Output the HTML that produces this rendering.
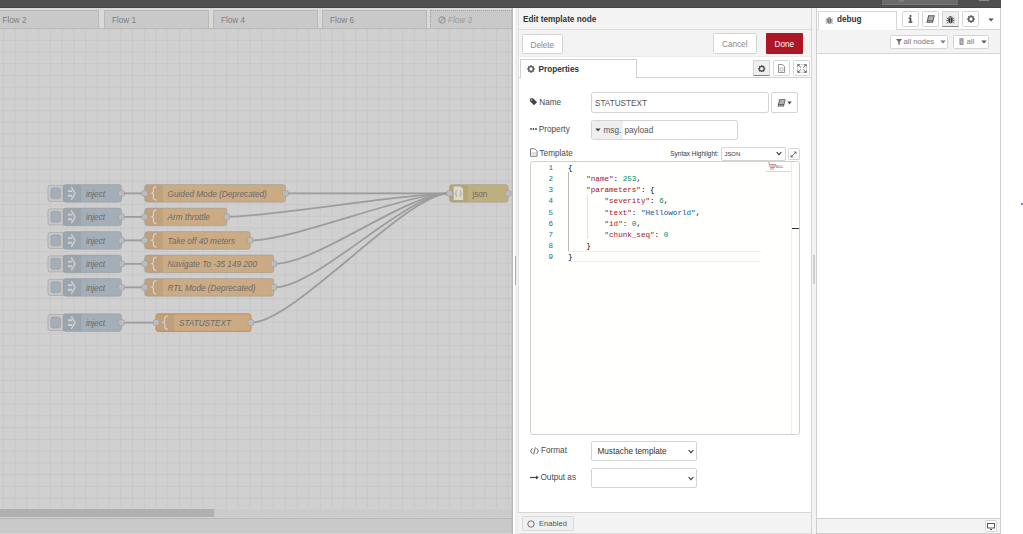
<!DOCTYPE html><html><head><meta charset="utf-8"><style>
*{box-sizing:border-box}
html,body{margin:0;padding:0}
body{width:1023px;height:534px;overflow:hidden;background:#fff;position:relative;font-family:"Liberation Sans",sans-serif;font-size:8.2px;color:#555}
.a{position:absolute}
.t{position:absolute;white-space:nowrap;line-height:1}
.tab{position:absolute;top:10px;height:19px;width:105px;background:#c9c9c9;border:1px solid #b9b9b9;border-bottom:none}
.tab span{position:absolute;left:7px;top:5.6px;font-size:8.2px;color:#808080;line-height:1;white-space:nowrap}
.btn{position:absolute;background:#fff;border:1px solid #d4d4d4;border-radius:1.5px}
.inp{position:absolute;background:#fff;border:1px solid #d4d4d4;border-radius:2.5px}
.lbl{position:absolute;font-size:8.2px;color:#4a4a4a;white-space:nowrap;line-height:1}
.code{position:absolute;font-family:"Liberation Mono",monospace;font-size:7.6px;white-space:pre;line-height:11.14px;color:#000}
.k{color:#a31515}.s{color:#0451a5}.n{color:#098658}
</style></head><body>
<div class="a" style="left:0;top:0;width:1001px;height:8px;background:#505050;border-bottom:1px solid #464646"></div>
<div class="a" style="left:882px;top:0;width:76px;height:5px;background:#6b6b6b;border-bottom:1px dotted #7d7d7d"></div>
<div class="a" style="left:899px;top:0;width:5px;height:2px;background:#7f7f7f"></div>
<div class="a" style="left:979px;top:0;width:10px;height:1px;background:#8a8a8a"></div>
<div class="a" style="left:0;top:8px;width:513px;height:21px;background:#d9d9d9"></div>
<div class="tab" style="left:-6px"><span style="left:7.5px">Flow 2</span></div>
<div class="tab" style="left:104px"><span style="left:7px">Flow 1</span></div>
<div class="tab" style="left:213px"><span style="left:7px">Flow 4</span></div>
<div class="tab" style="left:322px"><span style="left:7px">Flow 6</span></div>
<div class="tab" style="left:430px;width:90px;border:1px dotted #a0a0a0;border-bottom:none"><span style="left:17px;font-style:italic;color:#9a9a9a">Flow 3</span><svg class="a" style="left:7px;top:5px" width="8" height="8" viewBox="0 0 8 8"><circle cx="4" cy="4" r="3.1" fill="none" stroke="#9a9a9a" stroke-width="1.2"/><line x1="1.9" y1="6.1" x2="6.1" y2="1.9" stroke="#9a9a9a" stroke-width="1.2"/></svg></div>
<div class="a" style="left:0;top:28px;width:513px;height:1px;background:#b9b9b9"></div>
<svg class="a" style="left:0;top:29px" width="513" height="489" viewBox="0 29 513 489"><rect x="0" y="29" width="513" height="489" fill="#d0d0d0"/><g stroke="#c8c8c8" stroke-width="1"><line x1="3.40" y1="29" x2="3.40" y2="518"/><line x1="15.14" y1="29" x2="15.14" y2="518"/><line x1="26.88" y1="29" x2="26.88" y2="518"/><line x1="38.62" y1="29" x2="38.62" y2="518"/><line x1="50.36" y1="29" x2="50.36" y2="518"/><line x1="62.10" y1="29" x2="62.10" y2="518"/><line x1="73.84" y1="29" x2="73.84" y2="518"/><line x1="85.58" y1="29" x2="85.58" y2="518"/><line x1="97.32" y1="29" x2="97.32" y2="518"/><line x1="109.06" y1="29" x2="109.06" y2="518"/><line x1="120.80" y1="29" x2="120.80" y2="518"/><line x1="132.54" y1="29" x2="132.54" y2="518"/><line x1="144.28" y1="29" x2="144.28" y2="518"/><line x1="156.02" y1="29" x2="156.02" y2="518"/><line x1="167.76" y1="29" x2="167.76" y2="518"/><line x1="179.50" y1="29" x2="179.50" y2="518"/><line x1="191.24" y1="29" x2="191.24" y2="518"/><line x1="202.98" y1="29" x2="202.98" y2="518"/><line x1="214.72" y1="29" x2="214.72" y2="518"/><line x1="226.46" y1="29" x2="226.46" y2="518"/><line x1="238.20" y1="29" x2="238.20" y2="518"/><line x1="249.94" y1="29" x2="249.94" y2="518"/><line x1="261.68" y1="29" x2="261.68" y2="518"/><line x1="273.42" y1="29" x2="273.42" y2="518"/><line x1="285.16" y1="29" x2="285.16" y2="518"/><line x1="296.90" y1="29" x2="296.90" y2="518"/><line x1="308.64" y1="29" x2="308.64" y2="518"/><line x1="320.38" y1="29" x2="320.38" y2="518"/><line x1="332.12" y1="29" x2="332.12" y2="518"/><line x1="343.86" y1="29" x2="343.86" y2="518"/><line x1="355.60" y1="29" x2="355.60" y2="518"/><line x1="367.34" y1="29" x2="367.34" y2="518"/><line x1="379.08" y1="29" x2="379.08" y2="518"/><line x1="390.82" y1="29" x2="390.82" y2="518"/><line x1="402.56" y1="29" x2="402.56" y2="518"/><line x1="414.30" y1="29" x2="414.30" y2="518"/><line x1="426.04" y1="29" x2="426.04" y2="518"/><line x1="437.78" y1="29" x2="437.78" y2="518"/><line x1="449.52" y1="29" x2="449.52" y2="518"/><line x1="461.26" y1="29" x2="461.26" y2="518"/><line x1="473.00" y1="29" x2="473.00" y2="518"/><line x1="484.74" y1="29" x2="484.74" y2="518"/><line x1="496.48" y1="29" x2="496.48" y2="518"/><line x1="508.22" y1="29" x2="508.22" y2="518"/><line x1="0" y1="40.24" x2="513" y2="40.24"/><line x1="0" y1="51.98" x2="513" y2="51.98"/><line x1="0" y1="63.72" x2="513" y2="63.72"/><line x1="0" y1="75.46" x2="513" y2="75.46"/><line x1="0" y1="87.20" x2="513" y2="87.20"/><line x1="0" y1="98.94" x2="513" y2="98.94"/><line x1="0" y1="110.68" x2="513" y2="110.68"/><line x1="0" y1="122.42" x2="513" y2="122.42"/><line x1="0" y1="134.16" x2="513" y2="134.16"/><line x1="0" y1="145.90" x2="513" y2="145.90"/><line x1="0" y1="157.64" x2="513" y2="157.64"/><line x1="0" y1="169.38" x2="513" y2="169.38"/><line x1="0" y1="181.12" x2="513" y2="181.12"/><line x1="0" y1="192.86" x2="513" y2="192.86"/><line x1="0" y1="204.60" x2="513" y2="204.60"/><line x1="0" y1="216.34" x2="513" y2="216.34"/><line x1="0" y1="228.08" x2="513" y2="228.08"/><line x1="0" y1="239.82" x2="513" y2="239.82"/><line x1="0" y1="251.56" x2="513" y2="251.56"/><line x1="0" y1="263.30" x2="513" y2="263.30"/><line x1="0" y1="275.04" x2="513" y2="275.04"/><line x1="0" y1="286.78" x2="513" y2="286.78"/><line x1="0" y1="298.52" x2="513" y2="298.52"/><line x1="0" y1="310.26" x2="513" y2="310.26"/><line x1="0" y1="322.00" x2="513" y2="322.00"/><line x1="0" y1="333.74" x2="513" y2="333.74"/><line x1="0" y1="345.48" x2="513" y2="345.48"/><line x1="0" y1="357.22" x2="513" y2="357.22"/><line x1="0" y1="368.96" x2="513" y2="368.96"/><line x1="0" y1="380.70" x2="513" y2="380.70"/><line x1="0" y1="392.44" x2="513" y2="392.44"/><line x1="0" y1="404.18" x2="513" y2="404.18"/><line x1="0" y1="415.92" x2="513" y2="415.92"/><line x1="0" y1="427.66" x2="513" y2="427.66"/><line x1="0" y1="439.40" x2="513" y2="439.40"/><line x1="0" y1="451.14" x2="513" y2="451.14"/><line x1="0" y1="462.88" x2="513" y2="462.88"/><line x1="0" y1="474.62" x2="513" y2="474.62"/><line x1="0" y1="486.36" x2="513" y2="486.36"/><line x1="0" y1="498.10" x2="513" y2="498.10"/><line x1="0" y1="509.84" x2="513" y2="509.84"/></g><path d="M121.50 193.40 C138.90 193.40 127.30 193.40 144.70 193.40" fill="none" stroke="#9c9c9c" stroke-width="1.76"/><path d="M285.50 193.40 C329.52 193.40 405.48 193.40 449.50 193.40" fill="none" stroke="#9c9c9c" stroke-width="1.76"/><path d="M121.50 216.90 C138.90 216.90 127.30 216.90 144.70 216.90" fill="none" stroke="#9c9c9c" stroke-width="1.76"/><path d="M226.90 216.90 C270.93 216.90 405.48 193.40 449.50 193.40" fill="none" stroke="#9c9c9c" stroke-width="1.76"/><path d="M121.50 240.40 C138.90 240.40 127.30 240.40 144.70 240.40" fill="none" stroke="#9c9c9c" stroke-width="1.76"/><path d="M250.30 240.40 C294.32 240.40 405.48 193.40 449.50 193.40" fill="none" stroke="#9c9c9c" stroke-width="1.76"/><path d="M121.50 263.90 C138.90 263.90 127.30 263.90 144.70 263.90" fill="none" stroke="#9c9c9c" stroke-width="1.76"/><path d="M273.80 263.90 C317.82 263.90 405.48 193.40 449.50 193.40" fill="none" stroke="#9c9c9c" stroke-width="1.76"/><path d="M121.50 287.40 C138.90 287.40 127.30 287.40 144.70 287.40" fill="none" stroke="#9c9c9c" stroke-width="1.76"/><path d="M273.80 287.40 C317.82 287.40 405.48 193.40 449.50 193.40" fill="none" stroke="#9c9c9c" stroke-width="1.76"/><path d="M121.50 322.60 C147.45 322.60 130.15 322.60 156.10 322.60" fill="none" stroke="#9c9c9c" stroke-width="1.76"/><path d="M250.90 322.60 C294.93 322.60 405.48 193.40 449.50 193.40" fill="none" stroke="#9c9c9c" stroke-width="1.76"/><rect x="48" y="185.40" width="17" height="16" rx="2" fill="#c8c8c8" stroke="#9c9c9c" stroke-width="0.6"/><rect x="50.8" y="187.80" width="9.7" height="11" rx="1.8" fill="#a3aeb8" stroke="#9c9c9c" stroke-width="0.6"/><rect x="63.00" y="184.60" width="58.50" height="17.6" rx="2.9" fill="#a3aeb8" stroke="#9c9c9c" stroke-width="0.6"/><path d="M65.90 184.90 H80.60 V201.90 H65.90 A2.6 2.6 0 0 1 63.30 199.30 V187.50 A2.6 2.6 0 0 1 65.90 184.90Z" fill="rgba(0,0,0,0.05)"/><line x1="80.60" y1="184.90" x2="80.60" y2="201.90" stroke="rgba(0,0,0,0.08)" stroke-width="0.6"/><g stroke="#d0d0d0" fill="none" stroke-linecap="round" stroke-linejoin="round"><path d="M68 191.10 H72 M68 195.80 H72" stroke-width="1.9" stroke-linecap="butt"/><path d="M71.6 187.60 L75 193.45 L71.6 199.30" stroke-width="1.4"/></g><text x="85.90" y="196.50" font-family="Liberation Sans" font-size="8.2" fill="#6a6a6a" style="font-style:italic;">inject</text><rect x="118.57" y="190.47" width="5.87" height="5.87" rx="1.76" fill="#bcbcbc" stroke="#9c9c9c" stroke-width="0.6"/><rect x="144.70" y="184.60" width="140.80" height="17.6" rx="2.9" fill="#caab84" stroke="#9c9c9c" stroke-width="0.6"/><path d="M147.60 184.90 H162.30 V201.90 H147.60 A2.6 2.6 0 0 1 145.00 199.30 V187.50 A2.6 2.6 0 0 1 147.60 184.90Z" fill="rgba(0,0,0,0.05)"/><line x1="162.30" y1="184.90" x2="162.30" y2="201.90" stroke="rgba(0,0,0,0.08)" stroke-width="0.6"/><path d="M156.50 186.50 C154.30 186.70 153.40 187.40 153.40 189.20 V191.60 C153.40 192.60 152.50 193.20 151.20 193.30 C152.50 193.40 153.40 194.00 153.40 195.00 V197.50 C153.40 199.30 154.30 200.00 156.50 200.20" fill="none" stroke="#d6d3ce" stroke-width="1.15"/><text x="167.60" y="196.50" font-family="Liberation Sans" font-size="8.2" fill="#6a6a6a" style="font-style:italic;">Guided Mode (Deprecated)</text><rect x="141.77" y="190.47" width="5.87" height="5.87" rx="1.76" fill="#bcbcbc" stroke="#9c9c9c" stroke-width="0.6"/><rect x="282.57" y="190.47" width="5.87" height="5.87" rx="1.76" fill="#bcbcbc" stroke="#9c9c9c" stroke-width="0.6"/><rect x="48" y="208.90" width="17" height="16" rx="2" fill="#c8c8c8" stroke="#9c9c9c" stroke-width="0.6"/><rect x="50.8" y="211.30" width="9.7" height="11" rx="1.8" fill="#a3aeb8" stroke="#9c9c9c" stroke-width="0.6"/><rect x="63.00" y="208.10" width="58.50" height="17.6" rx="2.9" fill="#a3aeb8" stroke="#9c9c9c" stroke-width="0.6"/><path d="M65.90 208.40 H80.60 V225.40 H65.90 A2.6 2.6 0 0 1 63.30 222.80 V211.00 A2.6 2.6 0 0 1 65.90 208.40Z" fill="rgba(0,0,0,0.05)"/><line x1="80.60" y1="208.40" x2="80.60" y2="225.40" stroke="rgba(0,0,0,0.08)" stroke-width="0.6"/><g stroke="#d0d0d0" fill="none" stroke-linecap="round" stroke-linejoin="round"><path d="M68 214.60 H72 M68 219.30 H72" stroke-width="1.9" stroke-linecap="butt"/><path d="M71.6 211.10 L75 216.95 L71.6 222.80" stroke-width="1.4"/></g><text x="85.90" y="220.00" font-family="Liberation Sans" font-size="8.2" fill="#6a6a6a" style="font-style:italic;">inject</text><rect x="118.57" y="213.97" width="5.87" height="5.87" rx="1.76" fill="#bcbcbc" stroke="#9c9c9c" stroke-width="0.6"/><rect x="144.70" y="208.10" width="82.20" height="17.6" rx="2.9" fill="#caab84" stroke="#9c9c9c" stroke-width="0.6"/><path d="M147.60 208.40 H162.30 V225.40 H147.60 A2.6 2.6 0 0 1 145.00 222.80 V211.00 A2.6 2.6 0 0 1 147.60 208.40Z" fill="rgba(0,0,0,0.05)"/><line x1="162.30" y1="208.40" x2="162.30" y2="225.40" stroke="rgba(0,0,0,0.08)" stroke-width="0.6"/><path d="M156.50 210.00 C154.30 210.20 153.40 210.90 153.40 212.70 V215.10 C153.40 216.10 152.50 216.70 151.20 216.80 C152.50 216.90 153.40 217.50 153.40 218.50 V221.00 C153.40 222.80 154.30 223.50 156.50 223.70" fill="none" stroke="#d6d3ce" stroke-width="1.15"/><text x="167.60" y="220.00" font-family="Liberation Sans" font-size="8.2" fill="#6a6a6a" style="font-style:italic;">Arm throttle</text><rect x="141.77" y="213.97" width="5.87" height="5.87" rx="1.76" fill="#bcbcbc" stroke="#9c9c9c" stroke-width="0.6"/><rect x="223.97" y="213.97" width="5.87" height="5.87" rx="1.76" fill="#bcbcbc" stroke="#9c9c9c" stroke-width="0.6"/><rect x="48" y="232.40" width="17" height="16" rx="2" fill="#c8c8c8" stroke="#9c9c9c" stroke-width="0.6"/><rect x="50.8" y="234.80" width="9.7" height="11" rx="1.8" fill="#a3aeb8" stroke="#9c9c9c" stroke-width="0.6"/><rect x="63.00" y="231.60" width="58.50" height="17.6" rx="2.9" fill="#a3aeb8" stroke="#9c9c9c" stroke-width="0.6"/><path d="M65.90 231.90 H80.60 V248.90 H65.90 A2.6 2.6 0 0 1 63.30 246.30 V234.50 A2.6 2.6 0 0 1 65.90 231.90Z" fill="rgba(0,0,0,0.05)"/><line x1="80.60" y1="231.90" x2="80.60" y2="248.90" stroke="rgba(0,0,0,0.08)" stroke-width="0.6"/><g stroke="#d0d0d0" fill="none" stroke-linecap="round" stroke-linejoin="round"><path d="M68 238.10 H72 M68 242.80 H72" stroke-width="1.9" stroke-linecap="butt"/><path d="M71.6 234.60 L75 240.45 L71.6 246.30" stroke-width="1.4"/></g><text x="85.90" y="243.50" font-family="Liberation Sans" font-size="8.2" fill="#6a6a6a" style="font-style:italic;">inject</text><rect x="118.57" y="237.47" width="5.87" height="5.87" rx="1.76" fill="#bcbcbc" stroke="#9c9c9c" stroke-width="0.6"/><rect x="144.70" y="231.60" width="105.60" height="17.6" rx="2.9" fill="#caab84" stroke="#9c9c9c" stroke-width="0.6"/><path d="M147.60 231.90 H162.30 V248.90 H147.60 A2.6 2.6 0 0 1 145.00 246.30 V234.50 A2.6 2.6 0 0 1 147.60 231.90Z" fill="rgba(0,0,0,0.05)"/><line x1="162.30" y1="231.90" x2="162.30" y2="248.90" stroke="rgba(0,0,0,0.08)" stroke-width="0.6"/><path d="M156.50 233.50 C154.30 233.70 153.40 234.40 153.40 236.20 V238.60 C153.40 239.60 152.50 240.20 151.20 240.30 C152.50 240.40 153.40 241.00 153.40 242.00 V244.50 C153.40 246.30 154.30 247.00 156.50 247.20" fill="none" stroke="#d6d3ce" stroke-width="1.15"/><text x="167.60" y="243.50" font-family="Liberation Sans" font-size="8.2" fill="#6a6a6a" style="font-style:italic;">Take off 40 meters</text><rect x="141.77" y="237.47" width="5.87" height="5.87" rx="1.76" fill="#bcbcbc" stroke="#9c9c9c" stroke-width="0.6"/><rect x="247.37" y="237.47" width="5.87" height="5.87" rx="1.76" fill="#bcbcbc" stroke="#9c9c9c" stroke-width="0.6"/><rect x="48" y="255.90" width="17" height="16" rx="2" fill="#c8c8c8" stroke="#9c9c9c" stroke-width="0.6"/><rect x="50.8" y="258.30" width="9.7" height="11" rx="1.8" fill="#a3aeb8" stroke="#9c9c9c" stroke-width="0.6"/><rect x="63.00" y="255.10" width="58.50" height="17.6" rx="2.9" fill="#a3aeb8" stroke="#9c9c9c" stroke-width="0.6"/><path d="M65.90 255.40 H80.60 V272.40 H65.90 A2.6 2.6 0 0 1 63.30 269.80 V258.00 A2.6 2.6 0 0 1 65.90 255.40Z" fill="rgba(0,0,0,0.05)"/><line x1="80.60" y1="255.40" x2="80.60" y2="272.40" stroke="rgba(0,0,0,0.08)" stroke-width="0.6"/><g stroke="#d0d0d0" fill="none" stroke-linecap="round" stroke-linejoin="round"><path d="M68 261.60 H72 M68 266.30 H72" stroke-width="1.9" stroke-linecap="butt"/><path d="M71.6 258.10 L75 263.95 L71.6 269.80" stroke-width="1.4"/></g><text x="85.90" y="267.00" font-family="Liberation Sans" font-size="8.2" fill="#6a6a6a" style="font-style:italic;">inject</text><rect x="118.57" y="260.97" width="5.87" height="5.87" rx="1.76" fill="#bcbcbc" stroke="#9c9c9c" stroke-width="0.6"/><rect x="144.70" y="255.10" width="129.10" height="17.6" rx="2.9" fill="#caab84" stroke="#9c9c9c" stroke-width="0.6"/><path d="M147.60 255.40 H162.30 V272.40 H147.60 A2.6 2.6 0 0 1 145.00 269.80 V258.00 A2.6 2.6 0 0 1 147.60 255.40Z" fill="rgba(0,0,0,0.05)"/><line x1="162.30" y1="255.40" x2="162.30" y2="272.40" stroke="rgba(0,0,0,0.08)" stroke-width="0.6"/><path d="M156.50 257.00 C154.30 257.20 153.40 257.90 153.40 259.70 V262.10 C153.40 263.10 152.50 263.70 151.20 263.80 C152.50 263.90 153.40 264.50 153.40 265.50 V268.00 C153.40 269.80 154.30 270.50 156.50 270.70" fill="none" stroke="#d6d3ce" stroke-width="1.15"/><text x="167.60" y="267.00" font-family="Liberation Sans" font-size="8.2" fill="#6a6a6a" style="font-style:italic;">Navigate To -35 149 200</text><rect x="141.77" y="260.97" width="5.87" height="5.87" rx="1.76" fill="#bcbcbc" stroke="#9c9c9c" stroke-width="0.6"/><rect x="270.87" y="260.97" width="5.87" height="5.87" rx="1.76" fill="#bcbcbc" stroke="#9c9c9c" stroke-width="0.6"/><rect x="48" y="279.40" width="17" height="16" rx="2" fill="#c8c8c8" stroke="#9c9c9c" stroke-width="0.6"/><rect x="50.8" y="281.80" width="9.7" height="11" rx="1.8" fill="#a3aeb8" stroke="#9c9c9c" stroke-width="0.6"/><rect x="63.00" y="278.60" width="58.50" height="17.6" rx="2.9" fill="#a3aeb8" stroke="#9c9c9c" stroke-width="0.6"/><path d="M65.90 278.90 H80.60 V295.90 H65.90 A2.6 2.6 0 0 1 63.30 293.30 V281.50 A2.6 2.6 0 0 1 65.90 278.90Z" fill="rgba(0,0,0,0.05)"/><line x1="80.60" y1="278.90" x2="80.60" y2="295.90" stroke="rgba(0,0,0,0.08)" stroke-width="0.6"/><g stroke="#d0d0d0" fill="none" stroke-linecap="round" stroke-linejoin="round"><path d="M68 285.10 H72 M68 289.80 H72" stroke-width="1.9" stroke-linecap="butt"/><path d="M71.6 281.60 L75 287.45 L71.6 293.30" stroke-width="1.4"/></g><text x="85.90" y="290.50" font-family="Liberation Sans" font-size="8.2" fill="#6a6a6a" style="font-style:italic;">inject</text><rect x="118.57" y="284.47" width="5.87" height="5.87" rx="1.76" fill="#bcbcbc" stroke="#9c9c9c" stroke-width="0.6"/><rect x="144.70" y="278.60" width="129.10" height="17.6" rx="2.9" fill="#caab84" stroke="#9c9c9c" stroke-width="0.6"/><path d="M147.60 278.90 H162.30 V295.90 H147.60 A2.6 2.6 0 0 1 145.00 293.30 V281.50 A2.6 2.6 0 0 1 147.60 278.90Z" fill="rgba(0,0,0,0.05)"/><line x1="162.30" y1="278.90" x2="162.30" y2="295.90" stroke="rgba(0,0,0,0.08)" stroke-width="0.6"/><path d="M156.50 280.50 C154.30 280.70 153.40 281.40 153.40 283.20 V285.60 C153.40 286.60 152.50 287.20 151.20 287.30 C152.50 287.40 153.40 288.00 153.40 289.00 V291.50 C153.40 293.30 154.30 294.00 156.50 294.20" fill="none" stroke="#d6d3ce" stroke-width="1.15"/><text x="167.60" y="290.50" font-family="Liberation Sans" font-size="8.2" fill="#6a6a6a" style="font-style:italic;">RTL Mode (Deprecated)</text><rect x="141.77" y="284.47" width="5.87" height="5.87" rx="1.76" fill="#bcbcbc" stroke="#9c9c9c" stroke-width="0.6"/><rect x="270.87" y="284.47" width="5.87" height="5.87" rx="1.76" fill="#bcbcbc" stroke="#9c9c9c" stroke-width="0.6"/><rect x="48" y="314.60" width="17" height="16" rx="2" fill="#c8c8c8" stroke="#9c9c9c" stroke-width="0.6"/><rect x="50.8" y="317.00" width="9.7" height="11" rx="1.8" fill="#a3aeb8" stroke="#9c9c9c" stroke-width="0.6"/><rect x="63.00" y="313.80" width="58.50" height="17.6" rx="2.9" fill="#a3aeb8" stroke="#9c9c9c" stroke-width="0.6"/><path d="M65.90 314.10 H80.60 V331.10 H65.90 A2.6 2.6 0 0 1 63.30 328.50 V316.70 A2.6 2.6 0 0 1 65.90 314.10Z" fill="rgba(0,0,0,0.05)"/><line x1="80.60" y1="314.10" x2="80.60" y2="331.10" stroke="rgba(0,0,0,0.08)" stroke-width="0.6"/><g stroke="#d0d0d0" fill="none" stroke-linecap="round" stroke-linejoin="round"><path d="M68 320.30 H72 M68 325.00 H72" stroke-width="1.9" stroke-linecap="butt"/><path d="M71.6 316.80 L75 322.65 L71.6 328.50" stroke-width="1.4"/></g><text x="85.90" y="325.70" font-family="Liberation Sans" font-size="8.2" fill="#6a6a6a" style="font-style:italic;">inject</text><rect x="118.57" y="319.67" width="5.87" height="5.87" rx="1.76" fill="#bcbcbc" stroke="#9c9c9c" stroke-width="0.6"/><rect x="156.10" y="313.80" width="94.80" height="17.6" rx="2.9" fill="#caab84" stroke="#cf8f57" stroke-width="1.2"/><path d="M159.00 314.10 H173.70 V331.10 H159.00 A2.6 2.6 0 0 1 156.40 328.50 V316.70 A2.6 2.6 0 0 1 159.00 314.10Z" fill="rgba(0,0,0,0.05)"/><line x1="173.70" y1="314.10" x2="173.70" y2="331.10" stroke="rgba(0,0,0,0.08)" stroke-width="0.6"/><path d="M167.90 315.70 C165.70 315.90 164.80 316.60 164.80 318.40 V320.80 C164.80 321.80 163.90 322.40 162.60 322.50 C163.90 322.60 164.80 323.20 164.80 324.20 V326.70 C164.80 328.50 165.70 329.20 167.90 329.40" fill="none" stroke="#d6d3ce" stroke-width="1.15"/><text x="179.00" y="325.70" font-family="Liberation Sans" font-size="8.2" fill="#6a6a6a" style="font-style:italic;">STATUSTEXT</text><rect x="153.17" y="319.67" width="5.87" height="5.87" rx="1.76" fill="#bcbcbc" stroke="#9c9c9c" stroke-width="0.6"/><rect x="247.97" y="319.67" width="5.87" height="5.87" rx="1.76" fill="#bcbcbc" stroke="#9c9c9c" stroke-width="0.6"/><rect x="449.50" y="184.60" width="58.60" height="17.6" rx="2.9" fill="#bfaf7e" stroke="#9c9c9c" stroke-width="0.6"/><path d="M452.40 184.90 H467.10 V201.90 H452.40 A2.6 2.6 0 0 1 449.80 199.30 V187.50 A2.6 2.6 0 0 1 452.40 184.90Z" fill="rgba(0,0,0,0.05)"/><line x1="467.10" y1="184.90" x2="467.10" y2="201.90" stroke="rgba(0,0,0,0.08)" stroke-width="0.6"/><path d="M453.70 186.50 H460.50 L463.10 189.10 V199.90 H453.70Z" fill="#d9d9d9"/><path d="M458.10 190.20 C457.10 190.20 457.40 191.40 457.30 192.60 C457.30 193.20 456.90 193.40 456.50 193.40 C456.90 193.40 457.30 193.60 457.30 194.20 C457.40 195.40 457.10 196.60 458.10 196.60 M461.10 190.20 C462.10 190.20 461.80 191.40 461.90 192.60 C461.90 193.20 462.30 193.40 462.70 193.40 C462.30 193.40 461.90 193.60 461.90 194.20 C461.80 195.40 462.10 196.60 461.10 196.60" fill="none" stroke="#b8965a" stroke-width="0.8" transform="translate(-1.2 0)"/><text x="472.40" y="196.50" font-family="Liberation Sans" font-size="8.2" fill="#6a6a6a" style="">json</text><rect x="446.57" y="190.47" width="5.87" height="5.87" rx="1.76" fill="#bcbcbc" stroke="#9c9c9c" stroke-width="0.6"/><rect x="505.17" y="190.47" width="5.87" height="5.87" rx="1.76" fill="#bcbcbc" stroke="#9c9c9c" stroke-width="0.6"/><rect x="0" y="509" width="214.4" height="8" fill="#b0b0b0"/><rect x="214.4" y="509" width="300" height="8" fill="#cbcbcb"/></svg>
<div class="a" style="left:0;top:518px;width:513px;height:16px;background:#c9c9c9;border-top:1px solid #b6b6b6;border-bottom:1px solid #d4d4d4"></div>
<!-- tray shadow + resize handle -->
<div class="a" style="left:511px;top:8px;width:1px;height:526px;background:rgba(0,0,0,0.04)"></div>
<div class="a" style="left:512px;top:8px;width:1px;height:526px;background:#b8b8b8"></div>
<div class="a" style="left:513px;top:8px;width:2px;height:526px;background:#fff"></div>
<div class="a" style="left:515px;top:8px;width:3px;height:526px;background:#efefef"></div>
<div class="a" style="left:515px;top:256px;width:1px;height:29px;background:#a8a8a8"></div>
<div class="a" style="left:518px;top:8px;width:1px;height:526px;background:#e2e2e2"></div>
<!-- tray body -->
<div class="a" style="left:519px;top:8px;width:292px;height:526px;background:#fff"></div>
<!-- header -->
<div class="a" style="left:519px;top:8px;width:292px;height:49px;background:#f3f3f3"></div>
<div class="a" style="left:518px;top:29px;width:293px;height:1px;background:#dcdcdc"></div>
<div class="a" style="left:518px;top:56px;width:293px;height:1px;background:#eaeaea"></div>
<div class="t" style="left:523px;top:16px;font-size:8.2px;font-weight:bold;color:#333">Edit template node</div>
<div class="btn" style="left:522px;top:34px;width:41px;height:20px"></div>
<div class="t" style="left:530.5px;top:41.5px;color:#888">Delete</div>
<div class="btn" style="left:713px;top:33px;width:44px;height:21px"></div>
<div class="t" style="left:722px;top:41px;color:#888">Cancel</div>
<div class="a" style="left:766px;top:33px;width:37px;height:21px;background:#ad1625;border-radius:1px"></div>
<div class="t" style="left:774.5px;top:41px;color:#fff">Done</div>
<!-- tabs -->
<div class="a" style="left:518px;top:77px;width:293px;height:1px;background:#d0d0d0"></div>
<div class="a" style="left:520px;top:59px;width:117px;height:19px;background:#fff;border:1px solid #d0d0d0;border-bottom:none;border-radius:1px 1px 0 0"></div>
<svg class="a" style="left:527px;top:64.5px" width="8" height="8" viewBox="0 0 16 16"><path fill="#555" d="M15.45 6.49 L15.45 9.51 L13.24 9.97 L13.10 10.31 L14.33 12.20 L12.20 14.33 L10.31 13.10 L9.97 13.24 L9.51 15.45 L6.49 15.45 L6.03 13.24 L5.69 13.10 L3.80 14.33 L1.67 12.20 L2.90 10.31 L2.76 9.97 L0.55 9.51 L0.55 6.49 L2.76 6.03 L2.90 5.69 L1.67 3.80 L3.80 1.67 L5.69 2.90 L6.03 2.76 L6.49 0.55 L9.51 0.55 L9.97 2.76 L10.31 2.90 L12.20 1.67 L14.33 3.80 L13.10 5.69 L13.24 6.03Z"/><circle cx="8" cy="8" r="3.4" fill="#fff"/></svg>
<div class="t" style="left:538.5px;top:65.5px;font-weight:bold;color:#333">Properties</div>
<div class="a" style="left:753px;top:60px;width:17px;height:16px;background:#efefef;border:1px solid #d4d4d4;border-bottom:1.5px solid #888"></div>
<svg class="a" style="left:758px;top:64.5px" width="7.5" height="7.5" viewBox="0 0 16 16"><path fill="#444" d="M15.45 6.49 L15.45 9.51 L13.24 9.97 L13.10 10.31 L14.33 12.20 L12.20 14.33 L10.31 13.10 L9.97 13.24 L9.51 15.45 L6.49 15.45 L6.03 13.24 L5.69 13.10 L3.80 14.33 L1.67 12.20 L2.90 10.31 L2.76 9.97 L0.55 9.51 L0.55 6.49 L2.76 6.03 L2.90 5.69 L1.67 3.80 L3.80 1.67 L5.69 2.90 L6.03 2.76 L6.49 0.55 L9.51 0.55 L9.97 2.76 L10.31 2.90 L12.20 1.67 L14.33 3.80 L13.10 5.69 L13.24 6.03Z"/><circle cx="8" cy="8" r="3.8" fill="#efefef"/></svg>
<div class="btn" style="left:773px;top:60px;width:17px;height:16px"></div>
<svg class="a" style="left:778px;top:63.5px" width="7" height="9" viewBox="0 0 7 9"><path d="M0.5 0.5H4.5L6.5 2.5V8.5H0.5Z" fill="none" stroke="#777" stroke-width="0.8"/><rect x="2" y="4" width="3" height="3" fill="none" stroke="#999" stroke-width="0.6"/></svg>
<div class="btn" style="left:793px;top:60px;width:17px;height:16px"></div>
<svg class="a" style="left:796.5px;top:63.5px" width="10" height="9" viewBox="0 0 10 9"><path d="M0.3 0.3H3.4L0.3 3.1Z M9.7 0.3H6.6L9.7 3.1Z M0.3 8.7H3.4L0.3 5.9Z M9.7 8.7H6.6L9.7 5.9Z" fill="#555"/><path d="M1.5 1.3L4 3.6M8.5 1.3L6 3.6M1.5 7.7L4 5.4M8.5 7.7L6 5.4" stroke="#666" stroke-width="0.9"/><path d="M3.4 0.7H6.6M3.4 8.3H6.6M0.7 3.1V5.9M9.3 3.1V5.9" stroke="#aaa" stroke-width="0.6"/></svg>

<!-- Name row -->
<svg class="a" style="left:530px;top:98px" width="7.5" height="7.5" viewBox="0 0 16 16"><path fill="#444" d="M0 1.5V7l8.5 8.5 6.5-6.5L6.5 .5H1Q0 .5 0 1.5z"/><circle cx="3.5" cy="4" r="1.4" fill="#fff"/></svg>
<div class="lbl" style="left:539.3px;top:99px">Name</div>
<div class="inp" style="left:591px;top:92px;width:178px;height:21px"></div>
<div class="t" style="left:595px;top:99.5px;color:#555">STATUSTEXT</div>
<div class="btn" style="left:771px;top:92px;width:27px;height:21px;border-radius:2px"></div>
<svg class="a" style="left:777px;top:98.5px" width="9" height="8" viewBox="0 0 9 8"><path d="M2.2 0.3H8.6L6.9 7.5H0.5Z" fill="#555"/><path d="M3 1.1H7.6L6.7 5H2Z" fill="#fff" fill-opacity="0.55"/><path d="M1.6 6.3H6.4" stroke="#ddd" stroke-width="0.6"/></svg><svg class="a" style="left:786.5px;top:101px" width="5" height="4" viewBox="0 0 5 4"><path d="M0.2 0.6H4.8L2.5 3.4Z" fill="#555"/></svg>
<!-- Property row -->
<svg class="a" style="left:530px;top:127.5px" width="7" height="2" viewBox="0 0 7 2"><circle cx="1" cy="1" r="0.9" fill="#444"/><circle cx="3.5" cy="1" r="0.9" fill="#444"/><circle cx="6" cy="1" r="0.9" fill="#444"/></svg>
<div class="lbl" style="left:538.8px;top:126px">Property</div>
<div class="inp" style="left:591px;top:119.5px;width:147px;height:20px;overflow:hidden">
  <div class="a" style="left:0;top:0;width:31px;height:20px;background:#efefef"></div>
</div>
<svg class="a" style="left:595px;top:128px" width="6" height="4" viewBox="0 0 6 4"><path d="M0.3 0.5H5.7L3 3.5Z" fill="#444"/></svg>
<div class="t" style="left:603.5px;top:126.5px;color:#555">msg.</div>
<div class="t" style="left:624.5px;top:126.5px;color:#555">payload</div>
<!-- Template row -->
<svg class="a" style="left:530px;top:148px" width="7.5" height="9" viewBox="0 0 8 9"><path d="M0.5 0.5H5L7.5 3V8.5H0.5Z" fill="none" stroke="#666" stroke-width="0.9"/><path d="M2.5 4.5L1.8 5.5 2.5 6.5M5.5 4.5L6.2 5.5 5.5 6.5M4.4 4.2L3.6 6.8" stroke="#777" stroke-width="0.6" fill="none"/></svg>
<div class="lbl" style="left:539.5px;top:149.5px">Template</div>
<div class="t" style="left:670.3px;top:150.5px;font-size:6.45px;color:#333">Syntax Highlight:</div>
<div class="inp" style="left:721px;top:147px;width:64.5px;height:13.5px;border-radius:2px"></div>
<div class="t" style="left:724.5px;top:152px;font-size:5.9px;color:#333">JSON</div>
<svg class="a" style="left:775.5px;top:151px" width="6" height="5" viewBox="0 0 6 5"><path d="M0.6 1L3 3.6 5.4 1" fill="none" stroke="#333" stroke-width="1.1"/></svg>
<div class="btn" style="left:787.5px;top:148px;width:12px;height:11.5px;border-radius:1.5px"></div>
<svg class="a" style="left:790px;top:150.5px" width="7" height="7" viewBox="0 0 7 7"><path d="M1 6L6 1M3.8 1H6V3.2M1 3.8V6H3.2" fill="none" stroke="#555" stroke-width="0.8"/></svg>

<!-- editor -->
<div class="a" style="left:530px;top:161px;width:270px;height:274px;background:#fffffe;border:1px solid #d0d0d0;border-radius:2.5px"></div>
<div class="a" style="left:568px;top:250.5px;width:193px;height:11px;border-top:1px solid #eeeeee;border-bottom:1px solid #eeeeee"></div>
<div class="a" style="left:568.3px;top:171.5px;width:1px;height:79px;background:#b8b8b8"></div>
<div class="a" style="left:586.6px;top:193.7px;width:1px;height:45px;background:#e0e0e0"></div>
<div class="code" style="left:543px;top:163px;color:#1f6e88;text-align:right;width:10px">1
2
3
4
5
6
7
8
9</div>
<div class="code" style="left:568px;top:163px">{
    <span class="k">"name"</span>: <span class="n">253</span>,
    <span class="k">"parameters"</span>: {
        <span class="k">"severity"</span>: <span class="n">6</span>,
        <span class="k">"text"</span>: <span class="s">"Helloworld"</span>,
        <span class="k">"id"</span>: <span class="n">0</span>,
        <span class="k">"chunk_seq"</span>: <span class="n">0</span>
    }
}</div>
<!-- minimap -->
<svg class="a" style="left:766px;top:162px" width="26" height="10" viewBox="0 0 26 10"><path d="M2 1H4M3 2.5H10M3 4H12M4 5.5H9M4 7H8" stroke="#c89090" stroke-width="1"/><path d="M9 4H16M10 5.5H17" stroke="#8aa9d0" stroke-width="0.8"/><line x1="0" y1="9.5" x2="25" y2="9.5" stroke="#c8dcf0" stroke-width="1"/></svg>
<div class="a" style="left:791px;top:162px;width:1px;height:272px;background:#ececec"></div>
<div class="a" style="left:792px;top:227.5px;width:7px;height:1.5px;background:#333"></div>

<!-- Format row -->
<svg class="a" style="left:530px;top:446.5px" width="9" height="8" viewBox="0 0 9 8"><path d="M2.4 1.2L0.6 4 2.4 6.8M6.6 1.2L8.4 4 6.6 6.8M5.4 0.3L3.6 7.7" fill="none" stroke="#555" stroke-width="0.85"/></svg>
<div class="lbl" style="left:541px;top:447px">Format</div>
<div class="inp" style="left:591px;top:441px;width:106px;height:20px;border-radius:2px"></div>
<div class="t" style="left:597.5px;top:448px;color:#333">Mustache template</div>
<svg class="a" style="left:688px;top:448.5px" width="6" height="5" viewBox="0 0 6 5"><path d="M0.6 1L3 3.6 5.4 1" fill="none" stroke="#333" stroke-width="1.1"/></svg>
<!-- Output row -->
<svg class="a" style="left:530px;top:474.5px" width="9" height="5" viewBox="0 0 9 5"><path d="M0 2.5H6.5" stroke="#444" stroke-width="1.2"/><path d="M6 0.5L8.8 2.5 6 4.5Z" fill="#444"/></svg>
<div class="lbl" style="left:540.5px;top:473.5px">Output as</div>
<div class="inp" style="left:591px;top:468px;width:106px;height:20px;border-radius:2px"></div>
<svg class="a" style="left:688px;top:475.5px" width="6" height="5" viewBox="0 0 6 5"><path d="M0.6 1L3 3.6 5.4 1" fill="none" stroke="#333" stroke-width="1.1"/></svg>

<!-- footer -->
<div class="a" style="left:518px;top:512px;width:293px;height:22px;background:#f3f3f3;border-top:1px solid #d6d6d6;border-bottom:1px solid #ddd"></div>
<div class="a" style="left:522px;top:516px;width:52px;height:14.5px;background:#f0f0f0;border:1px solid #dadada;border-radius:1px"></div>
<svg class="a" style="left:526.5px;top:519.5px" width="8" height="8" viewBox="0 0 8 8"><circle cx="4" cy="4" r="3.2" fill="none" stroke="#666" stroke-width="0.9"/></svg>
<div class="t" style="left:539px;top:520px;font-size:7.63px;color:#555">Enabled</div>

<!-- separator between tray and sidebar -->
<div class="a" style="left:811px;top:8px;width:6px;height:526px;background:#f3f3f3;border-left:1px solid #d6d6d6;border-right:1px solid #d0d0d0"></div>
<div class="a" style="left:813px;top:255px;width:2px;height:29px;background:#cfcfcf"></div>

<!-- sidebar -->
<div class="a" style="left:817px;top:8px;width:184px;height:526px;background:#fff;border-right:1px solid #cfcfcf"></div>
<div class="a" style="left:817px;top:29px;width:183px;height:1px;background:#d6d6d6"></div>
<div class="a" style="left:818px;top:11px;width:79px;height:19px;background:#fff;border:1px solid #d6d6d6;border-bottom:none"></div>
<svg class="a" style="left:825px;top:15.5px" width="8.5" height="8.5" viewBox="0 0 16 16"><g fill="#666"><path d="M4.2 3.6 Q8 1.2 11.8 3.6 L11.6 4.6 H4.4Z"/><path d="M4.3 5.2 H11.7 V10.5 Q11.7 14.8 8 15 Q4.3 14.8 4.3 10.5Z"/></g><path d="M8 5.6V14.5" stroke="#fff" stroke-width="1"/><path d="M4.3 7 L1.2 5.2 M11.7 7 L14.8 5.2 M4.3 9.6 H0.6 M11.7 9.6 H15.4 M4.6 12.2 L1.4 14.6 M11.4 12.2 L14.6 14.6" stroke="#666" stroke-width="1.4"/></svg>
<div class="t" style="left:837px;top:16px;font-weight:bold;color:#333">debug</div>
<div class="btn" style="left:902px;top:11px;width:17px;height:16px"></div>
<svg class="a" style="left:907.5px;top:15px" width="5" height="8" viewBox="0 0 5 8"><circle cx="2.5" cy="1" r="1" fill="#444"/><path d="M0.6 2.6H3.3V6.6H4.4V7.8H0.6V6.6H1.6V3.8H0.6Z" fill="#444"/></svg>
<div class="btn" style="left:922px;top:11px;width:17px;height:16px"></div>
<svg class="a" style="left:926px;top:15px" width="9" height="8" viewBox="0 0 9 8"><path d="M2.2 0.3H8.8L7 7.7H0.4Z" fill="#555"/><path d="M3 1.2H7.7L6.7 5.2H2Z" fill="#fff" fill-opacity="0.55"/><path d="M1.6 6.4H6.4" stroke="#ddd" stroke-width="0.6"/></svg>
<div class="a" style="left:942px;top:11px;width:17px;height:16px;background:#efefef;border:1px solid #d6d6d6;border-bottom:1.5px solid #888"></div>
<svg class="a" style="left:946px;top:14.5px" width="9" height="9" viewBox="0 0 16 16"><g fill="#333"><path d="M4.2 3.6 Q8 1.2 11.8 3.6 L11.6 4.6 H4.4Z"/><path d="M4.3 5.2 H11.7 V10.5 Q11.7 14.8 8 15 Q4.3 14.8 4.3 10.5Z"/></g><path d="M8 5.6V14.5" stroke="#efefef" stroke-width="1"/><path d="M4.3 7 L1.2 5.2 M11.7 7 L14.8 5.2 M4.3 9.6 H0.6 M11.7 9.6 H15.4 M4.6 12.2 L1.4 14.6 M11.4 12.2 L14.6 14.6" stroke="#333" stroke-width="1.4"/></svg>
<div class="btn" style="left:962px;top:11px;width:17px;height:16px"></div>
<svg class="a" style="left:966.5px;top:15px" width="8" height="8" viewBox="0 0 16 16"><path fill="#555" d="M15.45 6.49 L15.45 9.51 L13.24 9.97 L13.10 10.31 L14.33 12.20 L12.20 14.33 L10.31 13.10 L9.97 13.24 L9.51 15.45 L6.49 15.45 L6.03 13.24 L5.69 13.10 L3.80 14.33 L1.67 12.20 L2.90 10.31 L2.76 9.97 L0.55 9.51 L0.55 6.49 L2.76 6.03 L2.90 5.69 L1.67 3.80 L3.80 1.67 L5.69 2.90 L6.03 2.76 L6.49 0.55 L9.51 0.55 L9.97 2.76 L10.31 2.90 L12.20 1.67 L14.33 3.80 L13.10 5.69 L13.24 6.03Z"/><circle cx="8" cy="8" r="3.4" fill="#fff"/></svg>
<svg class="a" style="left:987.5px;top:17.5px" width="6" height="4" viewBox="0 0 6 4"><path d="M0.3 0.5H5.7L3 3.5Z" fill="#555"/></svg>
<!-- filter bar -->
<div class="a" style="left:817px;top:30px;width:183px;height:23.5px;background:#f3f3f3;border-bottom:1px solid #d6d6d6"></div>
<div class="btn" style="left:890px;top:34.5px;width:57.5px;height:14px"></div>
<svg class="a" style="left:896px;top:38.5px" width="6" height="6" viewBox="0 0 6 6"><path d="M0 0H6L3.7 2.8V6L2.3 5.2V2.8Z" fill="#666"/></svg>
<div class="t" style="left:903.5px;top:38px;font-size:7.63px;color:#777">all nodes</div>
<svg class="a" style="left:939.5px;top:40px" width="6" height="4" viewBox="0 0 6 4"><path d="M0.3 0.5H5.7L3 3.5Z" fill="#777"/></svg>
<div class="btn" style="left:953px;top:34.5px;width:35.5px;height:14px"></div>
<svg class="a" style="left:958.5px;top:38px" width="5" height="7" viewBox="0 0 5 7"><path d="M0 1H5M1.8 0.3H3.2" stroke="#777" stroke-width="0.8"/><path d="M0.9 1.9H4.1V6.5H0.9Z" fill="#bbb" stroke="#777" stroke-width="0.7"/></svg>
<div class="t" style="left:966.5px;top:38px;font-size:7.63px;color:#777">all</div>
<svg class="a" style="left:980.5px;top:40px" width="6" height="4" viewBox="0 0 6 4"><path d="M0.3 0.5H5.7L3 3.5Z" fill="#555"/></svg>
<!-- footer -->
<div class="a" style="left:817px;top:518px;width:183px;height:16px;background:#f3f3f3;border-top:1px solid #d0d0d0;border-bottom:1px solid #d0d0d0"></div>
<div class="btn" style="left:985px;top:520px;width:11.5px;height:11.5px"></div>
<svg class="a" style="left:987px;top:522.5px" width="8" height="7" viewBox="0 0 8 7"><rect x="0.5" y="0.5" width="7" height="4.5" fill="none" stroke="#444" stroke-width="0.9"/><path d="M3 6.5H5" stroke="#444" stroke-width="1"/></svg>

<div class="a" style="left:1021px;top:203px;width:2px;height:2px;background:#3050ff;border-radius:1px"></div>

</body></html>
